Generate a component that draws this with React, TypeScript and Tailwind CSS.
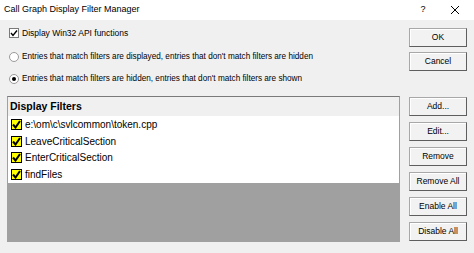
import React from "react";

const filters = [
  "e:\\om\\c\\svlcommon\\token.cpp",
  "LeaveCriticalSection",
  "EnterCriticalSection",
  "findFiles",
];

const YellowCheck = () => (
  <div className="w-[11px] h-[11px] bg-[#ffff00] border border-black flex items-center justify-center shrink-0">
    <svg width="9" height="9" viewBox="0 0 9 9">
      <path d="M1 4.5 L3.5 7.5 L8 1" fill="none" stroke="#000" strokeWidth="2" />
    </svg>
  </div>
);

const Radio = ({ on }: { on?: boolean }) => (
  <div className="w-[10px] h-[10px] rounded-full border border-[#9a9a9a] bg-white flex items-center justify-center shrink-0">
    {on && <div className="w-[4px] h-[4px] rounded-full bg-black" />}
  </div>
);

const Btn = ({ label, className = "" }: { label: string; className?: string }) => (
  <div
    className={
      "h-[19px] w-[58px] flex items-center justify-center bg-[#f2f2f2] border border-[#a8a8a8] border-b-[#5e5e5e] border-r-[#5e5e5e] shadow-[inset_1px_1px_0_#fff] text-[8.5px] text-black " +
      className
    }
  >
    {label}
  </div>
);

export default function App() {
  return (
    <div className="w-[474px] h-[253px] bg-[#f0f0f0] flex flex-col overflow-hidden font-['Liberation_Sans',Arial,sans-serif] text-black">
      {/* Title bar */}
      <div className="h-[20px] bg-white flex items-center pl-[4px] shrink-0">
        <span className="text-[9px] flex-1">Call Graph Display Filter Manager</span>
        <span className="text-[9px] w-[20px] text-center mr-[17px]">?</span>
        <svg width="10" height="10" viewBox="0 0 10 10" className="mr-[14px]">
          <path d="M1 1 L9 9 M9 1 L1 9" stroke="#000" strokeWidth="1" />
        </svg>
      </div>

      <div className="flex flex-1">
        {/* Left column */}
        <div className="flex flex-col pl-[7px] w-[400px]">
          <div className="flex items-center h-[14px] mt-[6px] pl-[2px] gap-[3px] text-[8.5px]">
            <div className="w-[10px] h-[10px] bg-white border border-[#7a7a7a] flex items-center justify-center shrink-0">
              <svg width="8" height="8" viewBox="0 0 8 8">
                <path d="M1 4 L3 6.5 L7 1.5" fill="none" stroke="#000" strokeWidth="1.4" />
              </svg>
            </div>
            <span>Display Win32 API functions</span>
          </div>
          <div className="flex items-center h-[14px] mt-[10px] pl-[2px] gap-[3px] text-[8.2px]">
            <Radio />
            <span>Entries that match filters are displayed, entries that don't match filters are hidden</span>
          </div>
          <div className="flex items-center h-[14px] mt-[8px] pl-[2px] gap-[3px] text-[8.2px]">
            <Radio on />
            <span>Entries that match filters are hidden, entries that don't match filters are shown</span>
          </div>

          {/* List */}
          <div className="mt-[10px] w-[393px] h-[146px] border border-[#a0a0a0] border-t-[#7a7a7a] flex flex-col bg-white">
            <div className="h-[19px] bg-[#f0f0f0] flex items-center pl-[2px] text-[10.5px] font-bold shrink-0">
              Display Filters
            </div>
            {filters.map((f) => (
              <div key={f} className="h-[16.75px] flex items-center pl-[3px] gap-[3px] text-[10px] shrink-0">
                <YellowCheck />
                <span>{f}</span>
              </div>
            ))}
            <div className="flex-1 bg-[#a0a0a0]" />
          </div>
        </div>

        {/* Buttons */}
        <div className="flex flex-col ml-[9px] pt-[8px]">
          <Btn label="OK" />
          <Btn label="Cancel" className="mt-[5px]" />
          <Btn label="Add..." className="mt-[26px]" />
          <Btn label="Edit..." className="mt-[6px]" />
          <Btn label="Remove" className="mt-[6px]" />
          <Btn label="Remove All" className="mt-[6px]" />
          <Btn label="Enable All" className="mt-[6px]" />
          <Btn label="Disable All" className="mt-[6px]" />
        </div>
      </div>
    </div>
  );
}
